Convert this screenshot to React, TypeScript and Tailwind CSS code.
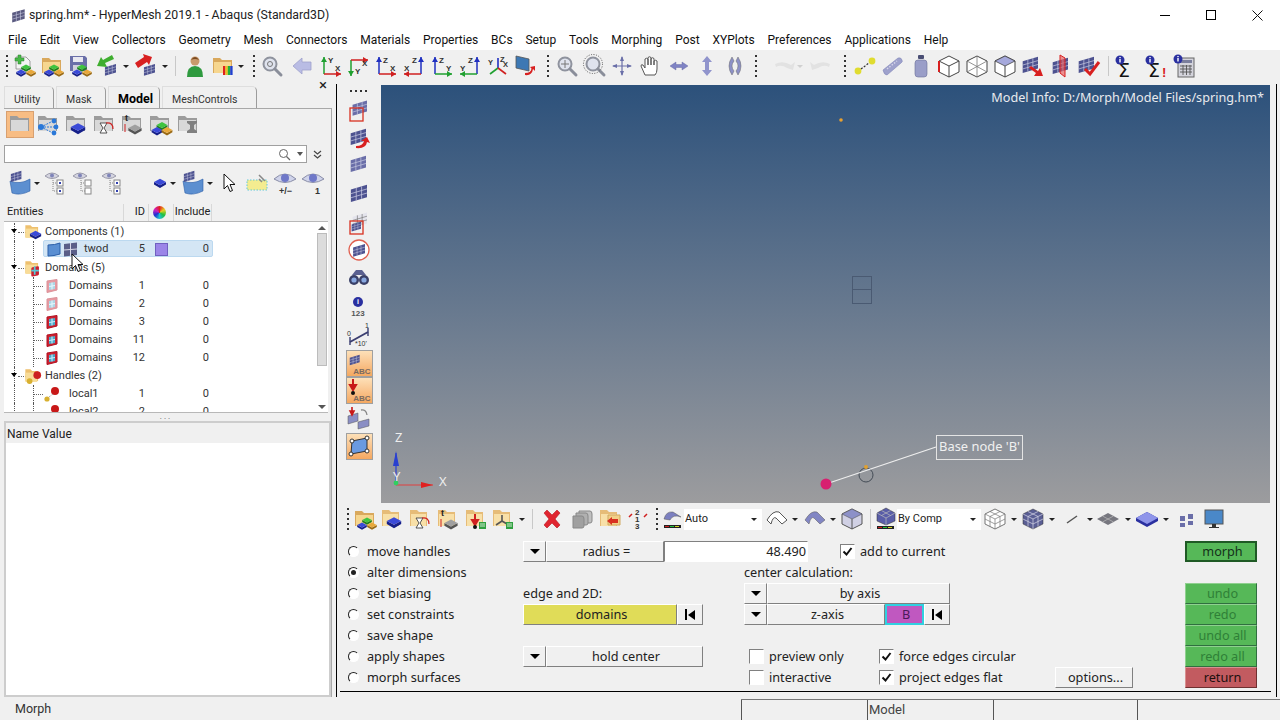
import React from "react";

type P = { children?: React.ReactNode };

// every toolbar glyph is drawn on the same 24px box
const S = ({ children }: P) => (
  <svg width={24} height={24} viewBox="0 0 24 24" className="shrink-0 overflow-visible">
    {children}
  </svg>
);

const Cell = ({ w, children }: { w: string; children?: React.ReactNode }) => (
  <div className={`flex h-[28px] shrink-0 items-center justify-center ${w}`}>{children}</div>
);

const Caret = ({ w = "w-[10px]", light }: { w?: string; light?: boolean }) => (
  <div className={`flex h-[28px] shrink-0 items-center justify-center ${w}`}>
    <div className={`h-0 w-0 border-x-[3px] border-t-[3px] border-x-transparent ${light ? "border-t-[#d0d0d0]" : "border-t-[#222]"}`} />
  </div>
);

const Grip = ({ w }: { w: string }) => (
  <div className={`flex h-[28px] shrink-0 flex-col items-center justify-center gap-[3px] ${w}`}>
    <i className="h-[2px] w-[2px] bg-[#333]" />
    <i className="h-[2px] w-[2px] bg-[#333]" />
    <i className="h-[2px] w-[2px] bg-[#333]" />
    <i className="h-[2px] w-[2px] bg-[#333]" />
    <i className="h-[2px] w-[2px] bg-[#333]" />
  </div>
);

const Sep = ({ w }: { w: string }) => (
  <div className={`flex h-[28px] shrink-0 items-center justify-center ${w}`}>
    <div className="h-[20px] w-px bg-[#c8c8c8]" />
  </div>
);

const Box = ({ x, y, c, d, s = 1 }: { x: number; y: number; c: string; d: string; s?: number }) => (
  <g transform={`translate(${x} ${y}) scale(${s})`}>
    <path d="M-6 0 L0 3.2 L6 0 V2.6 L0 6 L-6 2.6Z" fill={d} />
    <path d="M-6 0 L0 -3.2 L6 0 L0 3.2Z" fill={c} />
  </g>
);

const Trio = ({ s = 0.8 }: { s?: number }) => (
  <g>
    <Box x={14} y={13} s={s} c="#3fc43f" d="#1f7d1f" />
    <Box x={9} y={18} s={s} c="#3a4ad8" d="#16208a" />
    <Box x={19} y={18} s={s} c="#e8a83a" d="#9a6a14" />
  </g>
);

const FolderG = ({ grey }: { grey?: boolean }) => (
  <g>
    <path d="M2 4 h7 l2 2 h10 v13 H2z" fill={grey ? "#9c9c9c" : "#d9a85c"} />
    <path d="M3 8 h17 v11 H3z" fill={grey ? "#d8d8d8" : "#f6d68f"} />
  </g>
);

const MeshG = ({ t = "", fill = "#4d5290", line = "#c6c8e0" }: { t?: string; fill?: string; line?: string }) => (
  <g transform={t}>
    <path d="M3 8 L20 3 V16 L3 21Z" fill={fill} />
    <path d="M8.7 6.3 V19.3 M14.3 4.7 V17.7 M3 12.3 L20 7.3 M3 16.6 L20 11.6" stroke={line} strokeWidth=".8" fill="none" />
  </g>
);

const ArrowHeadV = ({ x, y, up, c }: { x: number; y: number; up: boolean; c: string }) => (
  <path d={up ? `M${x - 3} ${y + 5} L${x} ${y} L${x + 3} ${y + 5}Z` : `M${x - 3} ${y - 5} L${x} ${y} L${x + 3} ${y - 5}Z`} fill={c} />
);
const ArrowHeadH = ({ x, y, right, c }: { x: number; y: number; right: boolean; c: string }) => (
  <path d={right ? `M${x - 5} ${y - 3} L${x} ${y} L${x - 5} ${y + 3}Z` : `M${x + 5} ${y - 3} L${x} ${y} L${x + 5} ${y + 3}Z`} fill={c} />
);

const Axis = (p: { v: string; h: string; right?: boolean; top?: boolean; a: string; b: string }) => {
  const vx = p.right ? 19 : 5;
  const hy = p.top ? 6 : 20;
  const vEnd = p.top ? 22 : 3;
  const hEnd = p.right ? 2 : 22;
  return (
    <S>
      <line x1={vx} y1={hy} x2={vx} y2={vEnd} stroke={p.v} strokeWidth="1.5" />
      <line x1={vx} y1={hy} x2={hEnd} y2={hy} stroke={p.h} strokeWidth="1.5" />
      <ArrowHeadV x={vx} y={vEnd} up={!p.top} c={p.v} />
      <ArrowHeadH x={hEnd} y={hy} right={!p.right} c={p.h} />
      <text x={p.right ? 10 : 9} y={p.top ? 20 : 9} fontSize="8" fontWeight="700" fill="#333" fontFamily="Liberation Sans, sans-serif">{p.a}</text>
      <text x={p.right ? 2 : 16} y={p.top ? 12 : 17} fontSize="8" fontWeight="700" fill="#333" fontFamily="Liberation Sans, sans-serif">{p.b}</text>
    </S>
  );
};

const NewModel = () => (
  <S>
    <path d="M4 3 h10 l4 4 v8 H4z" fill="#f4f4f4" stroke="#888" strokeWidth=".8" />
    <path d="M6 1 h3 v3 h3 v3 h-3 v3 h-3 v-3 h-3 v-3 h3z" fill="#48b848" stroke="#2a802a" strokeWidth=".5" />
    <Trio />
  </S>
);
const FolderTrio = () => (
  <S>
    <FolderG />
    <Trio />
  </S>
);
const Floppy = () => (
  <S>
    <path d="M2 2 h15 l2 2 v13 H2z" fill="#6a6fa8" />
    <rect x="5" y="3" width="10" height="5" fill="#e8e8f0" />
    <rect x="5" y="11" width="10" height="6" fill="#d0d0dc" />
    <Trio />
  </S>
);
const ImportIc = ({ c, up }: { c: string; up?: boolean }) => (
  <S>
    <MeshG t="translate(8 8) scale(.65)" />
    <path
      d={up ? "M1 9 L10 3 L9 0 L18 3 L15 11 L13 8 L4 14Z" : "M17 1 L8 6 L6 3 L2 12 L12 13 L10 9 L19 5Z"}
      fill={c}
    />
  </S>
);
const User = () => (
  <S>
    <circle cx="12" cy="7" r="4.5" fill="#c99a6c" />
    <path d="M8 6 Q12 0 16 6 Q12 4 8 6Z" fill="#7a4a20" />
    <path d="M4 23 Q4 12 12 12 Q20 12 20 23Z" fill="#2f9a3f" />
  </S>
);
const FolderRainbow = () => (
  <S>
    <FolderG />
    <rect x="12" y="12" width="2.4" height="9" fill="#e02020" />
    <rect x="14.4" y="12" width="2.4" height="9" fill="#e8c020" />
    <rect x="16.8" y="12" width="2.4" height="9" fill="#20b040" />
    <rect x="19.2" y="12" width="2.4" height="9" fill="#2040d0" />
  </S>
);
const Loupe = ({ children }: P) => (
  <S>
    <circle cx="10" cy="10" r="6.5" fill="#dfe3ee" stroke="#8f939e" strokeWidth="2" />
    <path d="M15 15 L21 21" stroke="#8a8e9a" strokeWidth="3" strokeLinecap="round" />
    {children}
  </S>
);
const Back = () => (
  <S>
    <path d="M3 12 L12 4 V8 H21 V16 H12 V20Z" fill="#b9bce4" stroke="#9ea1cc" strokeWidth=".8" />
  </S>
);
const Tri = () => (
  <S>
    <path d="M12 14 V4" stroke="#2030c0" strokeWidth="1.6" />
    <path d="M12 14 L4 20" stroke="#20a030" strokeWidth="1.6" />
    <path d="M12 14 L20 20" stroke="#d02020" strokeWidth="1.6" />
    <text x="2" y="11" fontSize="7.5" fontWeight="700" fill="#333" fontFamily="Liberation Sans, sans-serif">Y</text>
    <text x="14" y="8" fontSize="7.5" fontWeight="700" fill="#333" fontFamily="Liberation Sans, sans-serif">Z</text>
    <text x="17" y="13" fontSize="7.5" fontWeight="700" fill="#333" fontFamily="Liberation Sans, sans-serif">X</text>
  </S>
);
const Monitor = () => (
  <S>
    <path d="M3 2 L16 5 V17 L3 14Z" fill="#3d78b4" stroke="#555" strokeWidth=".8" />
    <path d="M12 21 Q19 22 20 15 L22 17 L22 12 L17 13 L18.5 14.5 Q18 19 12 19Z" fill="#d82020" />
  </S>
);
const Pan = () => (
  <S>
    <path d="M12 3 V21 M3 12 H21" stroke="#6a6fa8" strokeWidth="1.2" />
    <path d="M12 2 L10 7 H14Z M12 22 L10 17 H14Z M2 12 L7 10 V14Z M22 12 L17 10 V14Z" fill="#6a6fa8" />
  </S>
);
const Hand = () => (
  <S>
    <path
      d="M7 21 L3 12 Q3 10 5 11 L7 14 V5 Q8.5 3.5 10 5 V11 V3.5 Q11.5 2 13 3.5 V11 V4.5 Q14.5 3 16 4.5 V11 V7 Q17.5 5.5 19 7 V15 Q19 19 17 21Z"
      fill="#fff"
      stroke="#555"
      strokeWidth="1"
    />
  </S>
);
const ArrowLR = () => (
  <S>
    <path d="M3 12 L9 8 V10.5 H15 V8 L21 12 L15 16 V13.5 H9 V16Z" fill="#7f83c4" stroke="#5a5e9c" strokeWidth=".4" />
  </S>
);
const ArrowUD = () => (
  <S>
    <path d="M12 2 L17 8 H14 V16 H17 L12 22 L7 16 H10 V8 H7Z" fill="#9094cc" />
  </S>
);
const Rotate = () => (
  <S>
    <path d="M9 3 Q3 12 9 21 L11 17 Q7 12 11 7Z" fill="#8d91c8" stroke="#666" strokeWidth=".5" />
    <path d="M15 3 Q21 12 15 21 L13 17 Q17 12 13 7Z" fill="#8d91c8" stroke="#666" strokeWidth=".5" />
  </S>
);
const Faded = ({ flip }: { flip?: boolean }) => (
  <S>
    <path
      d={flip ? "M22 10 Q14 6 6 11 L2 8 L4 16 L10 14 Q16 10 21 13Z" : "M2 10 Q10 6 18 11 L22 8 L20 16 L14 14 Q8 10 3 13Z"}
      fill="#e2e2e2"
    />
  </S>
);
const Dumbbell = () => (
  <S>
    <circle cx="5" cy="17" r="3.4" fill="#e0dc30" />
    <circle cx="19" cy="7" r="3.4" fill="#e0dc30" />
    <path d="M8 15 L16 9" stroke="#333" strokeWidth="1.2" strokeDasharray="2 1.5" />
  </S>
);
const Slab = () => (
  <S>
    <path d="M2 16 L17 4 Q20 3 21 6 Q22 8 20 9 L6 21 Q3 21 2 16Z" fill="#9ea1cc" stroke="#8286b8" strokeWidth=".6" />
    <path d="M6 15 L16 7" stroke="#d8d8ea" strokeWidth="1.4" strokeDasharray="1.5 1.5" />
  </S>
);
const Weight = () => (
  <S>
    <rect x="9" y="1" width="6" height="4" rx="1" fill="#4a4e74" />
    <rect x="6" y="6" width="12" height="17" rx="3" fill="#9a9ec8" stroke="#6a6e98" strokeWidth=".6" />
  </S>
);
const Cube = ({ red, inner, solid }: { red?: boolean; inner?: boolean; solid?: boolean }) => (
  <S>
    <path d="M12 2 L22 7 V18 L12 23 L2 18 V7Z" fill="#fff" stroke="#444" strokeWidth="1" />
    {solid && <path d="M12 2 L22 7 L12 12 L2 7Z" fill="#a6a9dc" stroke="#444" strokeWidth=".8" />}
    {!solid && !inner && <path d="M2 7 L12 12 L22 7 M12 12 V23" stroke="#444" fill="none" />}
    {solid && <path d="M12 12 V23" stroke="#444" />}
    {inner && <path d="M2 7 L22 18 M22 7 L2 18 M12 2 V23" stroke="#777" strokeWidth=".8" />}
    {red && <path d="M2 7 V18" stroke="#d82020" strokeWidth="2" />}
  </S>
);
const MeshRedArrow = () => (
  <S>
    <MeshG t="translate(-1 0) scale(.9)" />
    <path d="M10 12 L17 17 L19 14 L22 22 L13 22 L15 19 L8 14Z" fill="#d82020" />
  </S>
);
const MeshPlane = () => (
  <S>
    <MeshG t="translate(1 1) scale(.9)" />
    <path d="M11 1 L16 4 V23 L11 19Z" fill="#e85050" fillOpacity=".6" stroke="#d82020" />
  </S>
);
const MeshCheck = () => (
  <S>
    <MeshG t="translate(-1 0) scale(.9)" />
    <path d="M8 15 L13 20 L22 8" stroke="#d82020" strokeWidth="3" fill="none" />
  </S>
);
const Info = ({ x = 7, y = 6 }: { x?: number; y?: number }) => (
  <g>
    <circle cx={x} cy={y} r="4.5" fill="#2a30a0" />
    <rect x={x - 0.7} y={y - 1} width="1.4" height="3.5" fill="#fff" />
    <rect x={x - 0.7} y={y - 3} width="1.4" height="1.2" fill="#fff" />
  </g>
);
const Sigma = ({ bang }: { bang?: boolean }) => (
  <S>
    <text x="5" y="23" fontSize="19" fill="#111" fontFamily="DejaVu Sans, sans-serif">Σ</text>
    <Info />
    {bang && <text x="19" y="23" fontSize="13" fontWeight="700" fill="#d82020" fontFamily="Liberation Sans, sans-serif">!</text>}
  </S>
);
const Calc = () => (
  <S>
    <rect x="6" y="4" width="16" height="19" fill="#d4d4dc" stroke="#666" />
    <rect x="8" y="6" width="12" height="3" fill="#7a7e9c" />
    <path d="M8 12 H20 M8 15 H20 M8 18 H20 M11 11 V21 M14.5 11 V21 M18 11 V21" stroke="#555" strokeWidth=".9" />
    <Info x={6} y={5} />
  </S>
);

const TopToolbar = () => (
  <div className="flex h-[34px] shrink-0 items-center pb-[2px] pl-[3px]">
    <Grip w="w-[7px]" />
    <Cell w="w-[28px]"><NewModel /></Cell>
    <Cell w="w-[28px]"><FolderTrio /></Cell>
    <Cell w="w-[28px]"><Floppy /></Cell>
    <Cell w="w-[26px]"><ImportIc c="#3fae2f" /></Cell>
    <Caret w="w-[12px]" />
    <Cell w="w-[28px]"><ImportIc c="#d82020" up /></Cell>
    <Caret />
    <Sep w="w-[10px]" />
    <Cell w="w-[30px]"><User /></Cell>
    <Cell w="w-[26px]"><FolderRainbow /></Cell>
    <Caret />
    <Grip w="w-[16px]" />
    <Cell w="w-[20px]"><Loupe><circle cx="10" cy="10" r="2.5" fill="none" stroke="#777" /></Loupe></Cell>
    <div className="ml-[4px]"><Cell w="w-[32px]"><Back /></Cell></div>
    <Cell w="w-[26px]"><Axis v="#20a030" h="#d02020" a="Y" b="X" /></Cell>
    <Cell w="w-[28px]"><Axis v="#20a030" h="#d02020" top a="Y" b="X" /></Cell>
    <Cell w="w-[28px]"><Axis v="#2030c0" h="#d02020" a="Z" b="X" /></Cell>
    <Cell w="w-[28px]"><Axis v="#2030c0" h="#d02020" right a="Z" b="X" /></Cell>
    <Cell w="w-[28px]"><Axis v="#2030c0" h="#20a030" a="Z" b="Y" /></Cell>
    <Cell w="w-[28px]"><Axis v="#2030c0" h="#20a030" right a="Z" b="Y" /></Cell>
    <Cell w="w-[28px]"><Tri /></Cell>
    <Cell w="w-[26px]"><Monitor /></Cell>
    <Grip w="w-[20px]" />
    <Cell w="w-[18px]"><Loupe><path d="M6 10 H14 M10 6 V14" stroke="#777" /></Loupe></Cell>
    <div className="ml-[5px]"><Cell w="w-[28px]"><Loupe><circle cx="10" cy="10" r="9.5" fill="none" stroke="#555" strokeDasharray="1 1.5" /></Loupe></Cell></div>
    <Cell w="w-[26px]"><Pan /></Cell>
    <Cell w="w-[30px]"><Hand /></Cell>
    <Cell w="w-[28px]"><ArrowLR /></Cell>
    <Cell w="w-[28px]"><ArrowUD /></Cell>
    <Cell w="w-[28px]"><Rotate /></Cell>
    <Grip w="w-[14px]" />
    <div className="ml-[10px]"><Cell w="w-[24px]"><Faded /></Cell></div>
    <Caret w="w-[6px]" light />
    <div className="ml-[5px]"><Cell w="w-[24px]"><Faded flip /></Cell></div>
    <Grip w="w-[26px]" />
    <Cell w="w-[14px]"><Dumbbell /></Cell>
    <div className="ml-[7px]"><Cell w="w-[28px]"><Slab /></Cell></div>
    <Cell w="w-[28px]"><Weight /></Cell>
    <Cell w="w-[28px]"><Cube red /></Cell>
    <Cell w="w-[28px]"><Cube inner /></Cell>
    <Cell w="w-[28px]"><Cube solid /></Cell>
    <Cell w="w-[28px]"><MeshRedArrow /></Cell>
    <Cell w="w-[28px]"><MeshPlane /></Cell>
    <Cell w="w-[28px]"><MeshCheck /></Cell>
    <Sep w="w-[10px]" />
    <Cell w="w-[24px]"><Sigma /></Cell>
    <Cell w="w-[36px]"><Sigma bang /></Cell>
    <Cell w="w-[22px]"><Calc /></Cell>
  </div>
);

const GreyFolderIc = ({ children }: P) => (
  <S>
    <FolderG grey />
    {children}
  </S>
);

const Hourglass = () => (
  <g>
    <path d="M8 11 H15 L12 16 L15 21 H8 L11 16Z" fill="#fff" stroke="#444" strokeWidth=".9" />
    <path d="M14 11 Q21 10 21 17" stroke="#d02020" strokeWidth="1.2" fill="none" />
  </g>
);
const Thick = () => (
  <g>
    <Box x={15} y={16} s={1.1} c="#a0a0a0" d="#555" />
    <text x="5" y="9" fontSize="9" fontWeight="700" fill="#222" fontFamily="Liberation Sans, sans-serif">t</text>
    <path d="M5 12 V20" stroke="#d02020" />
  </g>
);
const Beam = () => <path d="M11 9 H21 V11 L18 13 V17 L21 19 V21 H11 V19 L14 17 V13 L11 11Z" fill="#808080" />;
const Graph = () => (
  <g>
    <circle cx="5" cy="15" r="3" fill="#2a78d8" />
    <path d="M5 15 L17 9 M5 15 L19 15 M5 15 L17 21" stroke="#2a78d8" strokeDasharray="2 1" />
    <circle cx="18" cy="9" r="2.4" fill="#2a78d8" />
    <circle cx="20" cy="15" r="2.4" fill="#2a78d8" />
    <circle cx="18" cy="21" r="2.4" fill="#2a78d8" />
  </g>
);

const Eye = ({ children }: P) => (
  <S>
    <path d="M1 8 Q12 -2 23 8 Q12 15 1 8Z" fill="#cfd3ea" stroke="#8a8ea8" />
    <circle cx="12" cy="7" r="4" fill="#6f78c8" />
    {children}
  </S>
);
const EyeTree = ({ checks }: { checks?: boolean }) => (
  <S>
    <path d="M1 5 Q8 -1 15 5 Q8 10 1 5Z" fill="#d5d5e0" stroke="#9a9aaa" />
    <circle cx="8" cy="4.5" r="2" fill="#7f84b8" />
    <rect x="13" y="9" width="6" height="6" fill="#fff" stroke="#888" />
    <rect x="13" y="17" width="6" height="6" fill="#fff" stroke="#888" />
    {checks && <rect x="15" y="11" width="2" height="2" fill="#3040b0" />}
    {checks && <rect x="15" y="19" width="2" height="2" fill="#3040b0" />}
    <path d="M9 9 V20 H13 M9 12 H13" stroke="#888" strokeDasharray="1 1" fill="none" />
  </S>
);
const MeshFlag = () => (
  <S>
    <path d="M2 10 Q12 14 22 8 V20 Q12 25 4 22Z" fill="#5c8fd0" stroke="#2b5ea8" strokeWidth=".6" />
    <MeshG t="translate(1 -2) scale(.62)" />
  </S>
);
const Cursor = () => (
  <svg width={14} height={20} viewBox="0 0 14 20" className="shrink-0">
    <path d="M1 1 V16 L4.5 12.5 L7 18.5 L9.5 17.5 L7 11.5 H12Z" fill="#fff" stroke="#111" strokeWidth="1" />
  </svg>
);

const Tab = ({ w, label, active }: { w: string; label: string; active?: boolean }) => (
  <div
    className={`flex h-[22px] items-center rounded-tr-[5px] border-r border-t border-l border-r-[#9c9c9c] border-t-[#dedede] border-l-[#dedede] bg-[#f0f0f0] pl-[9px] pt-[4px] ${w} ${active ? "text-[12.5px] font-bold text-black" : "text-[10.5px] text-[#333]"}`}
  >
    {label}
  </div>
);

const Folder2 = ({ src }: { src: "blue" | "red" | "gold" }) => (
  <S>
    <path d="M3 4 h6 l2 2 h7 v12 H3z" fill="#eec06e" />
    <path d="M3 8 h14 v11 H3z" fill="#f8dc98" />
    {src === "blue" && <Box x={15} y={14} s={1.1} c="#3a4ad8" d="#16208a" />}
    {src === "red" && (
      <g>
        <rect x="10" y="10" width="9" height="11" rx="1.5" fill="#cc2030" transform="skewY(-10) translate(0 3)" />
        <path d="M14 10 V20 M10 15 H19" stroke="#58c8d8" strokeWidth="2" />
      </g>
    )}
    {src === "gold" && (
      <g>
        <circle cx="17" cy="11" r="4.5" fill="#cc2020" />
        <circle cx="8" cy="18" r="3.4" fill="#d8b030" />
      </g>
    )}
  </S>
);

type Row = { name: string; id?: number; inc?: number; kind: "group" | "child" | "sel"; ic?: React.ReactNode };

const DomainIc = ({ dim }: { dim?: boolean }) => (
  <svg width={14} height={14} viewBox="0 0 14 14" className={`shrink-0 ${dim ? "opacity-45" : ""}`}>
    <path d="M2 2 L12 0.5 V11 L2 13.5Z" fill="#cc2030" stroke="#b01020" strokeWidth="1" />
    <path d="M4 4 L10 3 V10 L4 11Z" fill="#4aa8c8" />
    <path d="M7 3.5 V10.5 M4 7.5 L10 6.5" stroke="#d0f0ff" strokeWidth="1" />
  </svg>
);
const HandleIc = () => (
  <svg width={18} height={16} viewBox="0 0 18 16" className="shrink-0">
    <circle cx="12" cy="5" r="4" fill="#c81818" />
    <circle cx="4" cy="13" r="2.6" fill="#d8b030" />
    <path d="M6 11 L10 8" stroke="#999" strokeDasharray="1 1" />
  </svg>
);

const rows: Row[] = [
  { name: "Components (1)", kind: "group", ic: <Folder2 src="blue" /> },
  { name: "twod", id: 5, inc: 0, kind: "sel" },
  { name: "Domains (5)", kind: "group", ic: <Folder2 src="red" /> },
  { name: "Domains", id: 1, inc: 0, kind: "child", ic: <DomainIc dim /> },
  { name: "Domains", id: 2, inc: 0, kind: "child", ic: <DomainIc dim /> },
  { name: "Domains", id: 3, inc: 0, kind: "child", ic: <DomainIc /> },
  { name: "Domains", id: 11, inc: 0, kind: "child", ic: <DomainIc /> },
  { name: "Domains", id: 12, inc: 0, kind: "child", ic: <DomainIc /> },
  { name: "Handles (2)", kind: "group", ic: <Folder2 src="gold" /> },
  { name: "local1", id: 1, inc: 0, kind: "child", ic: <HandleIc /> },
  { name: "local2", id: 2, inc: 0, kind: "child", ic: <HandleIc /> },
];

const TreeRow = ({ r }: { r: Row }) => {
  const group = r.kind === "group";
  return (
    <div className="relative flex h-[18px] shrink-0 items-center text-[11px] text-[#333]">
      <div className="ml-[14px] h-full w-[19px] shrink-0 border-l border-dotted border-[#555]" />
      {group ? (
        <>
          <div className="absolute left-[11px] top-[6px] h-0 w-0 border-x-[3.5px] border-t-[4px] border-x-transparent border-t-black" />
          <div className="absolute left-[18px] top-[9px] w-[8px] border-t border-dotted border-[#666]" />
          <div className="-ml-[11px] flex w-[22px] shrink-0 justify-center">
            <div className="scale-[.85]">{r.ic}</div>
          </div>
          <span className="ml-[1px]">{r.name}</span>
        </>
      ) : (
        <>
          <div className="h-full w-[11px] shrink-0 border-l border-dotted border-[#555]" />
          {r.kind === "sel" ? (
            <div className="absolute left-[43px] top-[-1px] flex h-[17px] w-[170px] items-center rounded-[2px] border border-[#bcd9f0] bg-[#d4e6f5] pt-[1px]">
              <svg width={14} height={15} viewBox="0 0 14 15" className="ml-[3px] shrink-0">
                <path d="M1 3 Q8 3 13 1 V12 Q7 14 1 14Z" fill="#5a8fd2" stroke="#2b5ea8" />
              </svg>
              <svg width={15} height={15} viewBox="0 0 15 15" className="ml-[2px] shrink-0">
                <path d="M1 2 L14 0.5 V13 L1 14.5Z" fill="#5a5e88" />
                <path d="M7.5 1 V14 M1 8 L14 7" stroke="#d8d8e8" />
              </svg>
              <span className="ml-[6px] w-[33px] shrink-0">twod</span>
              <span className="w-[28px] shrink-0 text-right">{r.id}</span>
              <i className="ml-[10px] h-[13px] w-[13px] shrink-0 border border-[#7060c0] bg-[#9b85e8]" />
              <span className="ml-[31px] w-[10px] shrink-0 text-right">{r.inc}</span>
              <div className="absolute left-[27px] top-[12px] z-10"><Cursor /></div>
            </div>
          ) : (
            <>
              <div className="w-[3px] shrink-0">
                <div className="absolute left-[34px] top-[9px] w-[9px] border-t border-dotted border-[#666]" />
              </div>
              <div className="flex w-[10px] shrink-0 justify-center">{r.ic}</div>
              <span className="ml-[12px] w-[53px] shrink-0">{r.name}</span>
              <span className="w-[23px] shrink-0 text-right">{r.id}</span>
              <span className="w-[64px] shrink-0 text-right">{r.inc}</span>
            </>
          )}
        </>
      )}
    </div>
  );
};

const ArrowTiny = ({ up }: { up?: boolean }) => (
  <div className="flex h-[11px] shrink-0 items-center justify-center">
    <div
      className={
        up
          ? "h-0 w-0 border-x-[4px] border-b-[4px] border-x-transparent border-b-[#555]"
          : "h-0 w-0 border-x-[4px] border-t-[4px] border-x-transparent border-t-[#555]"
      }
    />
  </div>
);

const Chevrons = () => (
  <svg width={9} height={9} viewBox="0 0 9 9" className="shrink-0">
    <path d="M1 1 L4.5 4 L8 1 M1 5 L4.5 8 L8 5" stroke="#444" strokeWidth="1.2" fill="none" />
  </svg>
);

const LeftPanel = () => (
  <aside className="flex h-full w-[337px] shrink-0 flex-col border-r border-black pl-[4px] font-['Roboto',sans-serif]">
    <div className="flex h-[24px] shrink-0 items-end">
      <Tab w="w-[50px]" label="Utility" />
      <div className="ml-[2px]"><Tab w="w-[50px]" label="Mask" /></div>
      <div className="ml-[2px]"><Tab w="w-[52px]" label="Model" active /></div>
      <div className="ml-[2px]"><Tab w="w-[95px]" label="MeshControls" /></div>
      <span className="mb-[17px] ml-[62px] text-[15px] leading-[12px] text-[#222]">×</span>
    </div>
    <div className="flex min-h-0 w-[328px] flex-1 flex-col border-r border-t border-[#a8a8a8]">
      <div className="flex h-[30px] shrink-0 items-center pl-[2px]">
        <div className="flex h-[27px] w-[28px] items-center justify-center border border-[#d8a070] bg-[#f8bd84]"><GreyFolderIc /></div>
        <Cell w="w-[28px]"><GreyFolderIc><Graph /></GreyFolderIc></Cell>
        <Cell w="w-[28px]"><GreyFolderIc><Box x={14} y={15} s={1.2} c="#3a4ad8" d="#16208a" /></GreyFolderIc></Cell>
        <Cell w="w-[28px]"><GreyFolderIc><Hourglass /></GreyFolderIc></Cell>
        <Cell w="w-[28px]"><GreyFolderIc><Thick /></GreyFolderIc></Cell>
        <Cell w="w-[28px]"><GreyFolderIc><Trio s={0.9} /></GreyFolderIc></Cell>
        <Cell w="w-[28px]"><GreyFolderIc><Beam /></GreyFolderIc></Cell>
      </div>
      <div className="mt-[6px] flex h-[18px] shrink-0 items-center">
        <div className="flex h-full w-[303px] items-center justify-end border border-[#a0a0a0] bg-white pr-[3px]">
          <svg width={13} height={13} viewBox="0 0 13 13" className="mr-[6px]">
            <circle cx="5.5" cy="5.5" r="4" fill="none" stroke="#666" />
            <path d="M8.5 8.5 L12 12" stroke="#666" strokeWidth="1.3" />
          </svg>
          <div className="h-0 w-0 border-x-[3.5px] border-t-[4px] border-x-transparent border-t-[#555]" />
        </div>
        <div className="ml-[6px]"><Chevrons /></div>
      </div>
      <div className="flex h-[40px] shrink-0 items-center pl-[4px]">
        <Cell w="w-[24px]"><MeshFlag /></Cell>
        <Caret w="w-[10px]" />
        <div className="ml-[2px]"><Cell w="w-[24px]"><EyeTree checks /></Cell></div>
        <div className="ml-[4px]"><Cell w="w-[24px]"><EyeTree /></Cell></div>
        <div className="ml-[5px]"><Cell w="w-[24px]"><EyeTree checks /></Cell></div>
        <div className="ml-[27px]">
          <svg width={16} height={14} viewBox="0 0 16 14" className="shrink-0"><Box x={8} y={6} s={1} c="#3a4ad8" d="#16208a" /></svg>
        </div>
        <Caret w="w-[10px]" />
        <div className="ml-[3px]"><Cell w="w-[24px]"><MeshFlag /></Cell></div>
        <Caret w="w-[10px]" />
        <div className="ml-[8px]"><Cursor /></div>
        <div className="ml-[8px]">
          <Cell w="w-[24px]">
            <S>
              <rect x="2" y="9" width="20" height="10" fill="#f4ec90" stroke="#60c8d8" strokeDasharray="1.5 1.5" />
              <path d="M14 4 L20 10 M14 8 L17 11" stroke="#888" strokeWidth="1.5" />
            </S>
          </Cell>
        </div>
        <div className="ml-[4px]">
          <Cell w="w-[24px]">
            <Eye>
              <text x="6" y="23" fontSize="9" fontWeight="700" fill="#333" fontFamily="Liberation Sans, sans-serif">+/−</text>
            </Eye>
          </Cell>
        </div>
        <div className="ml-[4px]">
          <Cell w="w-[24px]">
            <Eye>
              <text x="14" y="23" fontSize="9" fontWeight="700" fill="#333" fontFamily="Liberation Sans, sans-serif">1</text>
            </Eye>
          </Cell>
        </div>
      </div>
      <div className="flex h-[18px] shrink-0 items-center pt-[1px] text-[11px] text-[#222]">
        <div className="w-[119px] pl-[3px]">Entities</div>
        <div className="flex h-full w-[25px] items-center justify-end border-l border-[#d8d8d8] pr-[3px]">ID</div>
        <div className="flex h-full w-[25px] items-center justify-center border-l border-[#d8d8d8] pr-[3px]">
          <i className="h-[13px] w-[13px] rounded-full bg-[conic-gradient(#e02020,#e8d020,#20c040,#20c0d0,#2030d0,#d020c0,#e02020)]" />
        </div>
        <div className="flex h-full w-[39px] items-center justify-center border-x border-[#d8d8d8]">Include</div>
      </div>
      <div className="flex h-[192px] w-[324px] shrink-0 overflow-hidden border-b border-t border-[#b8b8b8] bg-white">
        <div className="-ml-[4px] flex min-w-0 flex-1 flex-col overflow-hidden pt-[1px]">
          {rows.map((r, i) => (
            <TreeRow key={i} r={r} />
          ))}
        </div>
        <div className="flex w-[12px] shrink-0 flex-col">
          <ArrowTiny up />
          <div className="mx-[1px] h-[133px] border border-[#bcbcbc] bg-[#dcdcdc]" />
          <div className="flex-1" />
          <ArrowTiny />
        </div>
      </div>
      <div className="flex h-[8px] w-[324px] shrink-0 items-center justify-center">
        <span className="text-[8px] leading-[6px] tracking-[2px] text-[#555]">...</span>
      </div>
      <div className="flex min-h-0 flex-1 flex-col border-2 border-[#cdcdcd]">
        <div className="flex h-[20px] shrink-0 items-center pl-[1px] pt-[2px] text-[12px] text-[#222]">Name Value</div>
        <div className="flex-1 bg-white" />
      </div>
    </div>
  </aside>
);

const Abc = ({ children }: P) => (
  <div className="relative h-[27px] w-[27px] border border-[#a0a0a0] bg-gradient-to-b from-[#fde0b8] to-[#f4a860]">
    {children}
    <span className="absolute bottom-[0px] right-[1px] text-[8px] font-bold leading-[9px] text-[#7a6a60]">ABC</span>
  </div>
);

const VCell = ({ h, children }: { h: string; children?: React.ReactNode }) => (
  <div className={`flex w-full shrink-0 items-center justify-center ${h}`}>{children}</div>
);

const SideToolbar = () => (
  <div className="flex w-[44px] shrink-0 flex-col font-['Liberation_Sans',sans-serif]">
    <div className="flex h-[12px] shrink-0 items-center justify-center gap-[3px] pr-[2px]">
      <i className="h-[2px] w-[2px] bg-[#333]" />
      <i className="h-[2px] w-[2px] bg-[#333]" />
      <i className="h-[2px] w-[2px] bg-[#333]" />
      <i className="h-[2px] w-[2px] bg-[#333]" />
    </div>
    <VCell h="h-[27px]"><S><MeshG t="translate(3 -1) scale(.85)" fill="#6a6ea8" /><rect x="3" y="9" width="13" height="13" fill="none" stroke="#d83020" strokeWidth="1.3" /></S></VCell>
    <VCell h="h-[27px]"><S><MeshG t="translate(1 0) scale(.9)" /><path d="M9 20 Q16 20 17 15 L14 15 L20 11 L23 17 L20 16 Q19 23 9 22Z" fill="#d82020" /></S></VCell>
    <VCell h="h-[28px]"><S><MeshG t="translate(1 0) scale(.9)" fill="#6a6ea8" /></S></VCell>
    <VCell h="h-[28px]"><S><MeshG t="translate(1 1) scale(.95)" /></S></VCell>
    <VCell h="h-[33px]"><S><MeshG t="translate(3 -2) scale(.85)" fill="#e4e4ec" line="#777" /><MeshG t="translate(3 8) scale(.55)" /><rect x="3" y="9" width="13" height="13" fill="none" stroke="#d83020" strokeWidth="1.3" /></S></VCell>
    <VCell h="h-[20px]"><S><circle cx="12" cy="12" r="10" fill="#fff" stroke="#e06050" strokeWidth="1.3" /><MeshG t="translate(4 4) scale(.7)" /></S></VCell>
    <VCell h="h-[34px]">
      <S>
        <circle cx="7" cy="15" r="5" fill="#3a4068" />
        <circle cx="17" cy="15" r="5" fill="#3a4068" />
        <path d="M5 10 L9 5 H15 L19 10 Z" fill="#5a6090" />
        <circle cx="7" cy="15" r="2.6" fill="#88a8e0" />
        <circle cx="17" cy="15" r="2.6" fill="#88a8e0" />
      </S>
    </VCell>
    <VCell h="h-[26px]">
      <div className="flex flex-col items-center pr-[2px]">
        <span className="flex h-[10px] w-[10px] items-center justify-center rounded-full bg-[#2a30a0] text-[7px] font-bold leading-none text-white">i</span>
        <span className="mt-[2px] text-[8px] font-bold leading-[9px] text-[#555]">123</span>
      </div>
    </VCell>
    <VCell h="h-[30px]">
      <S>
        <path d="M3 19 L21 9" stroke="#3a3e70" strokeWidth="2" />
        <path d="M3 14 V22 M21 5 V13" stroke="#3a3e70" strokeWidth="1.4" />
        <text x="0" y="13" fontSize="7" fill="#333" fontFamily="Liberation Sans, sans-serif">0</text>
        <text x="18" y="5" fontSize="7" fill="#333" fontFamily="Liberation Sans, sans-serif">1</text>
        <text x="8" y="23" fontSize="7" fill="#333" fontFamily="Liberation Sans, sans-serif">*10'</text>
      </S>
    </VCell>
    <VCell h="h-[26px]">
      <Abc>
        <svg width={14} height={14} viewBox="0 0 24 24" className="absolute left-[1px] top-[2px]"><MeshG /></svg>
      </Abc>
    </VCell>
    <VCell h="h-[28px]">
      <Abc>
        <svg width={10} height={16} viewBox="0 0 10 16" className="absolute left-[1px] top-[1px]">
          <path d="M5 0 V9 M2 6 L5 11 L8 6Z" stroke="#c81818" strokeWidth="2" fill="#c81818" />
          <circle cx="5" cy="14" r="2" fill="#111" />
        </svg>
      </Abc>
    </VCell>
    <VCell h="h-[27px]">
      <S>
        <path d="M1 10 L11 7 V15 L1 18Z" fill="#8a8ec4" stroke="#555" strokeWidth=".5" />
        <path d="M11 16 L22 13 V20 L11 23Z" fill="#8a8ec4" stroke="#555" strokeWidth=".5" />
        <path d="M5 1 V7 M3 5 L5 9 L7 5Z" stroke="#c81818" strokeWidth="1.6" fill="#c81818" />
        <path d="M14 4 Q19 3 20 9" stroke="#888" strokeWidth="1.3" fill="none" />
      </S>
    </VCell>
    <VCell h="h-[30px]">
      <div className="flex h-[27px] w-[27px] items-center justify-center border border-[#a0a0a0] bg-gradient-to-b from-[#fde0b8] to-[#f4a860]">
        <svg width={24} height={22} viewBox="0 0 24 22">
          <path d="M5 6 L20 3 L20 16 L4 19Z" fill="#6a9ae0" stroke="#333" />
          <circle cx="5" cy="6" r="2" fill="#fff" stroke="#333" />
          <circle cx="20" cy="3" r="2" fill="#fff" stroke="#333" />
          <circle cx="20" cy="16" r="2" fill="#fff" stroke="#333" />
          <circle cx="4" cy="19" r="2" fill="#fff" stroke="#333" />
        </svg>
      </div>
    </VCell>
  </div>
);

const Viewport = () => (
  <div className="relative h-[418px] w-[889px] shrink-0 overflow-hidden bg-gradient-to-b from-[#2c517b] to-[#9c9c9e] font-['Noto_Sans',sans-serif]">
    <span className="absolute right-[6px] top-[3px] text-[12.65px] leading-[18px] text-[#e8eaee]">
      Model Info: D:/Morph/Model Files/spring.hm*
    </span>
    <svg width={889} height={418} viewBox="0 0 889 418" className="absolute left-0 top-0">
      <circle cx="460" cy="35" r="1.8" fill="#e8a030" />
      <rect x="471.5" y="191.5" width="19" height="27" fill="none" stroke="#4a5a72" />
      <line x1="471.5" y1="204.5" x2="490.5" y2="204.5" stroke="#4a5a72" />
      <circle cx="485" cy="390" r="7" fill="none" stroke="#444c56" />
      <line x1="445" y1="399" x2="555" y2="362" stroke="#eee" strokeWidth="1.2" />
      <circle cx="445" cy="399" r="5.5" fill="#d82070" />
      <circle cx="485" cy="382" r="2" fill="#e0a030" />
      <line x1="15" y1="400" x2="52" y2="400" stroke="#e04040" strokeWidth="1.2" />
      <path d="M52 400 L40 397 V403Z" fill="#e02020" />
      <line x1="15" y1="400" x2="15" y2="368" stroke="#2a40d0" strokeWidth="1.2" />
      <path d="M15 366 L12 381 H18Z" fill="#2a40d0" />
      <circle cx="15" cy="398" r="2.4" fill="#30d060" />
    </svg>
    <span className="absolute left-[14px] top-[344px] text-[13px] leading-[16px] text-[#eee]">Z</span>
    <span className="absolute left-[12px] top-[383px] text-[13px] leading-[16px] text-[#eee]">Y</span>
    <span className="absolute left-[58px] top-[388px] text-[13px] leading-[16px] text-[#eee]">X</span>
    <div className="absolute left-[555px] top-[350px] flex h-[25px] w-[87px] items-center justify-center border border-[#e4e4e4] pb-[2px] text-[12.9px] text-[#f0f0f0]">
      Base node 'B'
    </div>
  </div>
);

const FolderSmall = ({ children }: P) => (
  <S>
    <path d="M2 3 h7 l2 2 h8 v14 H2z" fill="#e6bc78" />
    <path d="M3 7 h15 v12 H3z" fill="#f8e0a8" />
    {children}
  </S>
);
const Green = () => (
  <g>
    <rect x="15" y="15" width="7" height="7" fill="#30a040" />
    <path d="M16 17 H21 M16 19 H21" stroke="#cfe8cf" />
  </g>
);

const BottomToolbar = () => (
  <div className="flex h-[33px] shrink-0 items-center pb-[1px] pl-[8px] font-['Roboto',sans-serif]">
    <Grip w="w-[6px]" />
    <Cell w="w-[27px]"><FolderTrio /></Cell>
    <Cell w="w-[28px]"><FolderSmall><Box x={14} y={14} s={1.2} c="#3a4ad8" d="#16208a" /></FolderSmall></Cell>
    <Cell w="w-[28px]"><FolderSmall><Hourglass /></FolderSmall></Cell>
    <Cell w="w-[28px]"><FolderSmall><Thick /></FolderSmall></Cell>
    <Cell w="w-[28px]"><FolderSmall><path d="M11 7 V16 M8 13 L11 18 L14 13Z" stroke="#d02020" strokeWidth="2" fill="#d02020" /><circle cx="11" cy="20" r="2" fill="#111" /><Green /></FolderSmall></Cell>
    <Cell w="w-[26px]"><FolderSmall><path d="M11 8 V14 L5 18 M11 14 L16 17" stroke="#555" strokeWidth="1.6" fill="none" /><Green /></FolderSmall></Cell>
    <Caret w="w-[12px]" />
    <Sep w="w-[8px]" />
    <Cell w="w-[32px]">
      <S>
        <path d="M4 6 L7 3 L12 8 L17 3 L20 6 L15 12 L20 18 L17 21 L12 16 L7 21 L4 18 L9 12Z" fill="#e02530" stroke="#b81820" strokeWidth=".6" />
      </S>
    </Cell>
    <Cell w="w-[28px]">
      <S>
        <path d="M9 4 H20 Q22 4 22 7 V14 Q22 16 20 16 H9Z" fill="#c0c0c0" stroke="#888" />
        <path d="M6 6 H16 Q18 6 18 9 V16 Q18 18 16 18 H6Z" fill="#b0b0b0" stroke="#888" />
        <path d="M3 9 H12 Q14 9 14 12 V19 Q14 21 12 21 H3Z" fill="#a0a0a0" stroke="#888" />
      </S>
    </Cell>
    <Cell w="w-[28px]"><FolderSmall><path d="M10 8 L22 8 V18 H10z" fill="#f2d088" stroke="#d0a860" /><path d="M9 14 L14 10 V12 H20 V16 H14 V18Z" fill="#d83020" /></FolderSmall></Cell>
    <Cell w="w-[28px]">
      <S>
        <text x="9" y="8" fontSize="8" fontWeight="700" fill="#333" fontFamily="Liberation Sans, sans-serif">2</text>
        <text x="9" y="15" fontSize="8" fontWeight="700" fill="#333" fontFamily="Liberation Sans, sans-serif">1</text>
        <text x="9" y="22" fontSize="8" fontWeight="700" fill="#333" fontFamily="Liberation Sans, sans-serif">3</text>
        <path d="M6 7 L3 10 M18 10 L21 7" stroke="#d02020" strokeWidth="1.5" />
      </S>
    </Cell>
    <Grip w="w-[10px]" />
    <Cell w="w-[22px]">
      <S>
        <path d="M3 12 Q5 4 12 5 L20 10 Q12 7 9 13Z" fill="#7c80c0" stroke="#555" strokeWidth=".5" />
        <path d="M3 18 H20 V21 H3z" fill="#222" />
        <path d="M4 19 H8 V20 H4z" fill="#d02020" />
        <path d="M9 19 H13 V20 H9z" fill="#20c040" />
        <path d="M14 19 H18 V20 H14z" fill="#d0d020" />
      </S>
    </Cell>
    <div className="flex h-[21px] w-[78px] shrink-0 items-center bg-white pl-[1px] text-[11px] text-[#222]">
      Auto
      <div className="ml-auto"><Caret w="w-[16px]" /></div>
    </div>
    <div className="ml-[3px]">
      <Cell w="w-[24px]"><S><path d="M2 13 Q8 3 14 5 L22 13 L17 17 L11 11 Q8 9 6 17Z" fill="#fff" stroke="#555" /></S></Cell>
    </div>
    <Caret w="w-[12px]" />
    <div className="ml-[1px]">
      <Cell w="w-[26px]"><S><path d="M2 13 Q8 3 14 5 L22 13 L17 17 L11 11 Q8 9 6 17Z" fill="#8286c4" stroke="#555" strokeWidth=".5" /></S></Cell>
    </div>
    <Caret w="w-[10px]" />
    <Cell w="w-[28px]"><S><path d="M12 2 L22 7 V17 L12 22 L2 17 V7Z" fill="#d0d0e4" stroke="#555" /><path d="M12 2 L22 7 L12 12 L2 7Z" fill="#8c90c8" stroke="#555" strokeWidth=".6" /><path d="M12 12 V22" stroke="#555" /></S></Cell>
    <Sep w="w-[8px]" />
    <div className="ml-[1px]">
      <Cell w="w-[22px]">
        <S>
          <path d="M12 1 L21 6 V14 L12 18 L3 14 V6Z" fill="#5a5ea8" stroke="#333" strokeWidth=".5" />
          <path d="M3 6 L12 11 L21 6 M12 11 V18 M7.5 3.5 L16.5 8.5 M16.5 3.5 L7.5 8.5" stroke="#bbb" strokeWidth=".7" fill="none" />
          <path d="M3 19 H20 V22 H3z" fill="#222" />
          <path d="M4 20 H8 V21 H4z" fill="#d02020" />
          <path d="M9 20 H13 V21 H9z" fill="#20c040" />
          <path d="M14 20 H18 V21 H14z" fill="#d0d020" />
        </S>
      </Cell>
    </div>
    <div className="flex h-[21px] w-[84px] shrink-0 items-center bg-white pl-[1px] text-[11px] text-[#222]">
      By Comp
      <div className="ml-auto"><Caret w="w-[16px]" /></div>
    </div>
    <Cell w="w-[28px]"><S><path d="M12 2 L22 7 V17 L12 22 L2 17 V7Z" fill="#fff" stroke="#777" /><path d="M2 7 L12 12 L22 7 M12 12 V22 M7 4.5 L17 9.5 M17 4.5 L7 9.5 M2 12 L12 17 L22 12 M7 9.5 V19.5 M17 9.5 V19.5" stroke="#777" strokeWidth=".7" fill="none" /></S></Cell>
    <Caret w="w-[10px]" />
    <Cell w="w-[28px]"><S><path d="M12 2 L22 7 V17 L12 22 L2 17 V7Z" fill="#5a5e94" stroke="#333" strokeWidth=".5" /><path d="M2 7 L12 12 L22 7 M12 12 V22 M7 4.5 L17 9.5 M17 4.5 L7 9.5 M2 12 L12 17 L22 12 M7 9.5 V19.5 M17 9.5 V19.5" stroke="#d8d8e8" strokeWidth=".7" fill="none" /></S></Cell>
    <Caret w="w-[10px]" />
    <Cell w="w-[30px]"><S><path d="M7 16 L17 9" stroke="#555" strokeWidth="1.5" /></S></Cell>
    <Caret w="w-[6px]" />
    <Cell w="w-[30px]"><S><path d="M12 6 L23 12 L12 18 L1 12Z" fill="#77777f" /><path d="M6.5 9 L17.5 15 M17.5 9 L6.5 15" stroke="#bbb" strokeWidth=".7" /></S></Cell>
    <Caret w="w-[10px]" />
    <Cell w="w-[28px]"><S><path d="M12 5 L23 11 V14 L12 20 L1 14 V11Z" fill="#2a30a0" /><path d="M12 5 L23 11 L12 17 L1 11Z" fill="#8f95ea" /></S></Cell>
    <Caret w="w-[10px]" />
    <Cell w="w-[30px]">
      <S>
        <path d="M6 9 H11 V14 H6Z M14 7 H19 V12 H14Z M6 16 H11 V20 H6Z M14 14 H19 V18 H14Z" fill="#6a6ea8" />
      </S>
    </Cell>
    <Cell w="w-[26px]">
      <S>
        <rect x="3" y="3" width="18" height="14" fill="#4a88c8" stroke="#555" />
        <path d="M10 17 H14 V20 H17 V21 H7 V20 H10Z" fill="#333" />
      </S>
    </Cell>
  </div>
);

const bevel = "border border-t-white border-l-white border-r-[#808080] border-b-[#808080]";
const bevelGreen = "border border-t-[#8fd08f] border-l-[#8fd08f] border-r-[#2f6f3f] border-b-[#2f6f3f]";
const bevelRed = "border border-t-[#d89090] border-l-[#d89090] border-r-[#6f3030] border-b-[#6f3030]";

const Radio = ({ label, on }: { label: string; on?: boolean }) => (
  <div className="flex h-[21px] items-center">
    <div className="flex h-[11px] w-[11px] shrink-0 items-center justify-center rounded-full border border-t-[#222] border-l-[#222] border-r-white border-b-white bg-white">
      {on && <i className="h-[5px] w-[5px] rounded-full bg-[#222]" />}
    </div>
    <span className="ml-[8px]">{label}</span>
  </div>
);

const Check = ({ label, on, w }: { label: string; on?: boolean; w?: string }) => (
  <div className={`flex h-[21px] shrink-0 items-center ${w ?? ""}`}>
    <div className="flex h-[15px] w-[15px] shrink-0 items-center justify-center border border-t-[#808080] border-l-[#808080] border-r-white border-b-white bg-white">
      {on && (
        <svg width={11} height={11} viewBox="0 0 11 11">
          <path d="M1.5 5.5 L4.5 8.5 L9.5 2" stroke="#111" strokeWidth="2" fill="none" />
        </svg>
      )}
    </div>
    <span className="ml-[5px]">{label}</span>
  </div>
);

const DropBtn = () => (
  <div className={`flex h-[21px] w-[23px] shrink-0 items-center justify-center bg-[#f0f0f0] ${bevel}`}>
    <div className="h-0 w-0 border-x-[5px] border-t-[5px] border-x-transparent border-t-black" />
  </div>
);

const Btn = ({ w, children, cls }: { w: string; children?: React.ReactNode; cls?: string }) => (
  <div className={`flex h-[21px] shrink-0 items-center justify-center pl-[3px] ${bevel} ${cls ?? "bg-[#f0f0f0]"} ${w}`}>{children}</div>
);

const First = () => (
  <div className={`flex h-[21px] w-[26px] shrink-0 items-center justify-center gap-[1px] bg-[#f0f0f0] ${bevel}`}>
    <i className="h-[11px] w-[2px] bg-black" />
    <div className="h-0 w-0 border-y-[5.5px] border-r-[7px] border-y-transparent border-r-black" />
  </div>
);

const Row7 = ({ children }: P) => <div className="flex h-[21px] items-center">{children}</div>;

const GreenBtn = ({ label }: { label: string }) => (
  <div className={`flex h-[21px] w-[72px] items-center justify-center bg-[#56b858] pl-[3px] text-[#2f8037] ${bevelGreen}`}>{label}</div>
);

const MorphPanel = () => (
  <div className="ml-[3px] flex h-[156px] w-[931px] shrink-0 border-b border-black pl-[8px] pt-[5px] font-['Noto_Sans',sans-serif] text-[12.7px] text-[#222]">
    <div className="flex w-[175px] shrink-0 flex-col">
      <Radio label="move handles" />
      <Radio label="alter dimensions" on />
      <Radio label="set biasing" />
      <Radio label="set constraints" />
      <Radio label="save shape" />
      <Radio label="apply shapes" />
      <Radio label="morph surfaces" />
    </div>
    <div className="flex w-[662px] shrink-0 flex-col">
      <Row7>
        <DropBtn />
        <Btn w="w-[118px]">radius =</Btn>
        <div className="flex h-[21px] w-[144px] shrink-0 items-center justify-end border border-t-[#808080] border-l-[#808080] border-r-white border-b-white bg-white pr-[1px]">48.490</div>
        <div className="ml-[32px]"><Check label="add to current" on /></div>
      </Row7>
      <Row7><span className="ml-[221px]">center calculation:</span></Row7>
      <Row7>
        <span className="w-[221px] shrink-0">edge and 2D:</span>
        <DropBtn />
        <Btn w="w-[183px]">by axis</Btn>
      </Row7>
      <Row7>
        <Btn w="w-[154px]" cls="bg-[#e0dc58]">domains</Btn>
        <First />
        <div className="w-[41px] shrink-0" />
        <DropBtn />
        <Btn w="w-[118px]">z-axis</Btn>
        <div className="flex h-[21px] w-[39px] shrink-0 items-center justify-center border-2 border-[#30d0e0] bg-[#c058c0] pl-[3px] text-[#4a1a5a]">B</div>
        <First />
      </Row7>
      <Row7 />
      <Row7>
        <DropBtn />
        <Btn w="w-[157px]">hold center</Btn>
        <div className="ml-[46px]"><Check label="preview only" w="w-[130px]" /></div>
        <Check label="force edges circular" on />
      </Row7>
      <Row7>
        <div className="ml-[226px]"><Check label="interactive" w="w-[130px]" /></div>
        <Check label="project edges flat" on w="w-[176px]" />
        <Btn w="w-[78px]">options...</Btn>
      </Row7>
    </div>
    <div className="flex w-[72px] shrink-0 flex-col">
      <div className="flex h-[21px] items-center justify-center border-2 border-[#1f5a25] bg-[#56b858] pl-[3px] text-[#14301a]">morph</div>
      <div className="h-[21px]" />
      <GreenBtn label="undo" />
      <GreenBtn label="redo" />
      <GreenBtn label="undo all" />
      <GreenBtn label="redo all" />
      <div className={`flex h-[21px] items-center justify-center bg-[#c25b60] pl-[3px] text-[#20100f] ${bevelRed}`}>return</div>
    </div>
  </div>
);

const menu = ["File", "Edit", "View", "Collectors", "Geometry", "Mesh", "Connectors", "Materials", "Properties", "BCs", "Setup", "Tools", "Morphing", "Post", "XYPlots", "Preferences", "Applications", "Help"];

export default function App() {
  return (
    <div className="flex h-[720px] w-[1280px] flex-col overflow-hidden bg-[#f0f0f0] font-['Roboto',sans-serif]">
      <header className="flex h-[29px] shrink-0 items-center bg-white pt-[1px] text-[12.3px] text-[#222]">
        <div className="ml-[8px] flex h-[20px] w-[20px] items-center justify-center">
          <svg width={16} height={16} viewBox="0 0 24 24"><MeshG t="scale(1.1)" fill="#5a5a80" /></svg>
        </div>
        <span className="ml-[1px]">spring.hm* - HyperMesh 2019.1 - Abaqus (Standard3D)</span>
        <div className="ml-auto flex items-center">
          <div className="flex w-[46px] justify-center"><i className="h-px w-[10px] bg-black" /></div>
          <div className="flex w-[46px] justify-center"><i className="h-[10px] w-[10px] border border-black" /></div>
          <div className="flex w-[46px] justify-center">
            <svg width={11} height={11} viewBox="0 0 11 11"><path d="M0.5 0.5 L10.5 10.5 M10.5 0.5 L0.5 10.5" stroke="#111" fill="none" /></svg>
          </div>
        </div>
      </header>
      <nav className="flex h-[21px] shrink-0 items-center gap-[12.85px] bg-white pl-[8px] text-[12px] text-[#111]">
        {menu.map((m) => (
          <span key={m}>{m}</span>
        ))}
      </nav>
      <TopToolbar />
      <main className="flex h-[613px] shrink-0">
        <LeftPanel />
        <div className="flex w-[940px] shrink-0 flex-col self-stretch border-r border-black pt-[1px]">
          <div className="flex shrink-0">
            <SideToolbar />
            <Viewport />
          </div>
          <BottomToolbar />
          <MorphPanel />
        </div>
      </main>
      <footer className="flex min-h-0 flex-1 items-stretch text-[12.5px] text-[#333]">
        <div className="flex w-[741px] shrink-0 items-center pl-[15px] pt-[1px]">Morph</div>
        <div className="mt-[2px] flex flex-1 border-t border-[#777]">
          <div className="w-[126px] border-l border-[#555]" />
          <div className="flex w-[126px] items-center border-l border-[#555] pl-[1px] text-[13px] text-[#444]">Model</div>
          <div className="w-[144px] border-l border-[#555]" />
          <div className="flex-1 border-l border-[#555]" />
        </div>
      </footer>
    </div>
  );
}
